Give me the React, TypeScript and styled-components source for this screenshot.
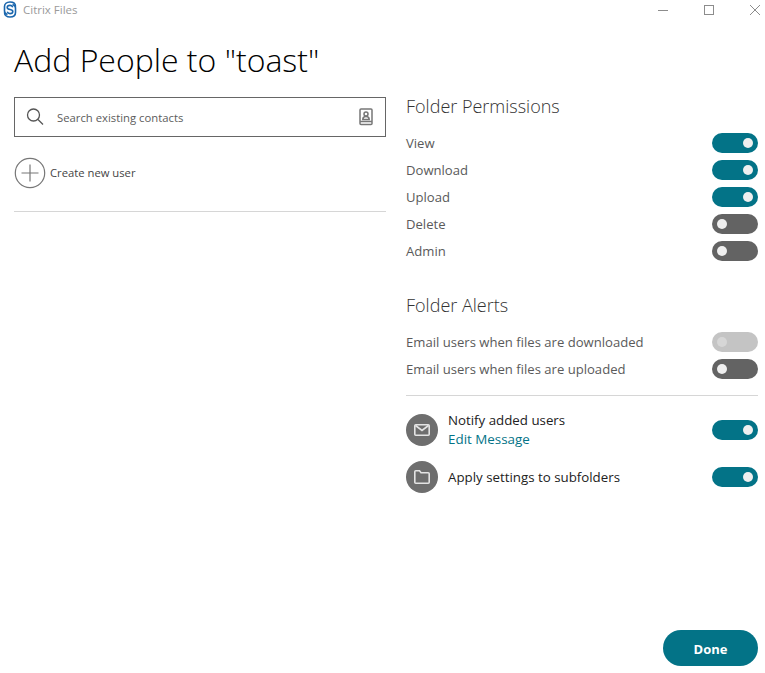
import React from "react";
import styled, { createGlobalStyle } from "styled-components";

const Global = createGlobalStyle`
  html, body { margin: 0; padding: 0; height: 100%; background: #fff; }
  #root { height: 100%; }
  * { box-sizing: border-box; }
  body { font-family: "Open Sans", "Noto Sans", "Liberation Sans", sans-serif; color: #1a1a1a; }
`;

const Page = styled.div`
  height: 673px;
  width: 765px;
  display: flex;
  flex-direction: column;
  overflow: hidden;
  background: #fff;
`;
const TitleBar = styled.div`
  height: 19px;
  display: flex;
  align-items: center;
  padding-left: 3px;
  flex: none;
`;
const AppName = styled.span`
  font-size: 11.5px;
  color: #9a9a9a;
  margin-left: 6px;
`;
const WindowControls = styled.div`
  margin-left: auto;
  display: flex;
  align-items: center;
  height: 19px;
  padding-right: 4px;
  gap: 34px;
  color: #8c8c8c;
`;
const Title = styled.h1`
  margin: 21px 0 0 14px;
  height: 40px;
  font-size: 32px;
  line-height: 40px;
  font-weight: 300;
  color: #000;
  flex: none;
`;
const Columns = styled.div`
  display: grid;
  grid-template-columns: 372px 352px;
  column-gap: 20px;
  padding: 17px 0 0 14px;
  flex: none;
`;
const LeftColumn = styled.div`
  display: flex;
  flex-direction: column;
`;
const SearchBox = styled.div`
  height: 40px;
  border: 1px solid #666;
  display: flex;
  align-items: center;
  padding: 0 12px 0 10px;
  color: #666;
`;
const SearchText = styled.span`
  font-size: 11.3px;
  line-height: 16px;
  padding-top: 1px;
  color: #5c5c5c;
  margin-left: 12px;
  flex: 1;
`;
const CreateRow = styled.div`
  height: 32px;
  margin-top: 20px;
  display: flex;
  align-items: center;
  color: #777;
`;
const CreateLabel = styled.span`
  font-size: 11.25px;
  color: #444;
  margin-left: 4px;
  margin-top: -2px;
`;
const LeftRule = styled.div`
  height: 1px;
  background: #d6d6d6;
  margin-top: 22px;
`;
const RightColumn = styled.div`
  display: flex;
  flex-direction: column;
`;
const Heading = styled.h2<{ $top?: number }>`
  margin: ${(p) => p.$top ?? 0}px 0 0;
  height: 18px;
  line-height: 18px;
  font-size: 18px;
  font-weight: 300;
  color: #333;
`;
const RowList = styled.div`
  display: flex;
  flex-direction: column;
  margin-top: 14px;
`;
const Row = styled.div`
  height: 27px;
  display: flex;
  align-items: center;
  justify-content: space-between;
`;
const RowLabel = styled.span`
  font-size: 13.1px;
  color: #5a5a5a;
`;
const Track = styled.div<{ $on?: boolean; $disabled?: boolean }>`
  width: 46px;
  height: 20px;
  border-radius: 10px;
  display: flex;
  align-items: center;
  padding: 0 5px;
  justify-content: ${(p) => (p.$on ? "flex-end" : "flex-start")};
  background: ${(p) => (p.$disabled ? "#c4c4c4" : p.$on ? "#037387" : "#636363")};
`;
const Knob = styled.div<{ $disabled?: boolean }>`
  width: 10px;
  height: 10px;
  border-radius: 50%;
  background: ${(p) => (p.$disabled ? "#d6d6d6" : "#efefef")};
`;
const RightRule = styled.div`
  height: 1px;
  background: #d6d6d6;
  margin-top: 13px;
`;
const OptionRow = styled.div<{ $h: number; $top: number }>`
  height: ${(p) => p.$h}px;
  margin-top: ${(p) => p.$top}px;
  display: flex;
  align-items: center;
`;
const IconCircle = styled.div`
  width: 32px;
  height: 32px;
  border-radius: 50%;
  background: #6e6e6e;
  display: flex;
  align-items: center;
  justify-content: center;
  flex: none;
`;
const OptionText = styled.div`
  margin-left: 10px;
  flex: 1;
  display: flex;
  flex-direction: column;
`;
const OptionLabel = styled.span`
  font-size: 13.3px;
  line-height: 19px;
  color: #222;
`;
const EditLink = styled.span`
  font-size: 13.4px;
  line-height: 19px;
  color: #037387;
`;
const Footer = styled.div`
  margin-top: auto;
  display: flex;
  justify-content: flex-end;
  padding: 0 7px 7px 0;
`;
const DoneButton = styled.button`
  width: 95px;
  height: 36px;
  border: none;
  border-radius: 18px;
  background: #037387;
  color: #fff;
  font-family: inherit;
  font-size: 13px;
  font-weight: 700;
  padding: 2px 0 0;
`;

const Toggle = ({ on, disabled }: { on?: boolean; disabled?: boolean }) => (
  <Track $on={on} $disabled={disabled}>
    <Knob $disabled={disabled} />
  </Track>
);

const Logo = () => (
  <svg width="14" height="17" viewBox="0 0 14 17" fill="none" stroke="#1a66ad" strokeWidth="1.6">
    <path d="M4.500 13.500C2.500 12.800 1.500 11.500 1.500 10V5.500C1.500 3 3.500 1 7 1s5.500 2 5.500 4.500" />
    <path d="M9.500 3.500C11.500 4.200 12.500 5.500 12.500 7v4.500C12.500 14 10.500 16 7 16s-5.500-2-5.500-4.500" />
    <path d="M9.800 6.200C9.300 5 8.300 4.400 7 4.400c-1.600 0-2.800.9-2.800 2.100 0 2.800 5.600 1.400 5.600 4 0 1.200-1.200 2.100-2.800 2.100-1.300 0-2.300-.6-2.800-1.800" />
  </svg>
);

export default function App() {
  return (
    <Page>
      <Global />
      <TitleBar>
        <Logo />
        <AppName>Citrix Files</AppName>
        <WindowControls>
          <svg width="12" height="12" viewBox="0 0 12 12"><path d="M1 6.500h10" stroke="currentColor" /></svg>
          <svg width="12" height="12" viewBox="0 0 12 12"><rect x="1.500" y="1.500" width="9" height="9" fill="none" stroke="currentColor" /></svg>
          <svg width="12" height="12" viewBox="0 0 12 12"><path d="M1 1l10 10M11 1L1 11" stroke="currentColor" /></svg>
        </WindowControls>
      </TitleBar>
      <Title>Add People to "toast"</Title>
      <Columns>
        <LeftColumn>
          <SearchBox>
            <svg width="20" height="20" viewBox="0 0 20 20" fill="none" stroke="#555" strokeWidth="1.3">
              <circle cx="8.500" cy="8" r="6" />
              <path d="M13 12.500l5 5" />
            </svg>
            <SearchText>Search existing contacts</SearchText>
            <svg width="14" height="18" viewBox="0 0 14 18" fill="none" stroke="#777" strokeWidth="1.5">
              <rect x="1" y="1" width="12" height="15.500" rx="1" />
              <path d="M1 13.500h12" />
              <circle cx="7" cy="6" r="2" />
              <path d="M3.800 11.500c0-2 1.400-3 3.200-3s3.200 1 3.200 3z" />
            </svg>
          </SearchBox>
          <CreateRow>
            <svg width="32" height="32" viewBox="0 0 32 32" fill="none" stroke="#777" strokeWidth="1.2">
              <circle cx="16" cy="16" r="14.700" />
              <path d="M16 7.500v17M7.500 16h17" />
            </svg>
            <CreateLabel>Create new user</CreateLabel>
          </CreateRow>
          <LeftRule />
        </LeftColumn>
        <RightColumn>
          <Heading>Folder Permissions</Heading>
          <RowList>
            <Row><RowLabel>View</RowLabel><Toggle on /></Row>
            <Row><RowLabel>Download</RowLabel><Toggle on /></Row>
            <Row><RowLabel>Upload</RowLabel><Toggle on /></Row>
            <Row><RowLabel>Delete</RowLabel><Toggle /></Row>
            <Row><RowLabel>Admin</RowLabel><Toggle /></Row>
          </RowList>
          <Heading $top={32}>Folder Alerts</Heading>
          <RowList>
            <Row><RowLabel>Email users when files are downloaded</RowLabel><Toggle disabled /></Row>
            <Row><RowLabel>Email users when files are uploaded</RowLabel><Toggle /></Row>
          </RowList>
          <RightRule />
          <OptionRow $h={38} $top={15}>
            <IconCircle>
              <svg width="16" height="12" viewBox="0 0 16 12" fill="none" stroke="#e4e4e4" strokeWidth="1.6">
                <rect x="0.800" y="0.800" width="14.400" height="10.400" rx="1" />
                <path d="M1.500 1.500l6.500 5 6.500-5" />
              </svg>
            </IconCircle>
            <OptionText>
              <OptionLabel>Notify added users</OptionLabel>
              <EditLink>Edit Message</EditLink>
            </OptionText>
            <Toggle on />
          </OptionRow>
          <OptionRow $h={32} $top={12}>
            <IconCircle>
              <svg width="16" height="14" viewBox="0 0 16 14" fill="none" stroke="#e4e4e4" strokeWidth="1.6">
                <path d="M.8 1.800c0-.6.4-1 1-1h3.700l1.500 2h7.200c.6 0 1 .4 1 1v8.400c0 .6-.4 1-1 1H1.800c-.6 0-1-.4-1-1z" />
              </svg>
            </IconCircle>
            <OptionText>
              <OptionLabel>Apply settings to subfolders</OptionLabel>
            </OptionText>
            <Toggle on />
          </OptionRow>
        </RightColumn>
      </Columns>
      <Footer>
        <DoneButton>Done</DoneButton>
      </Footer>
    </Page>
  );
}
